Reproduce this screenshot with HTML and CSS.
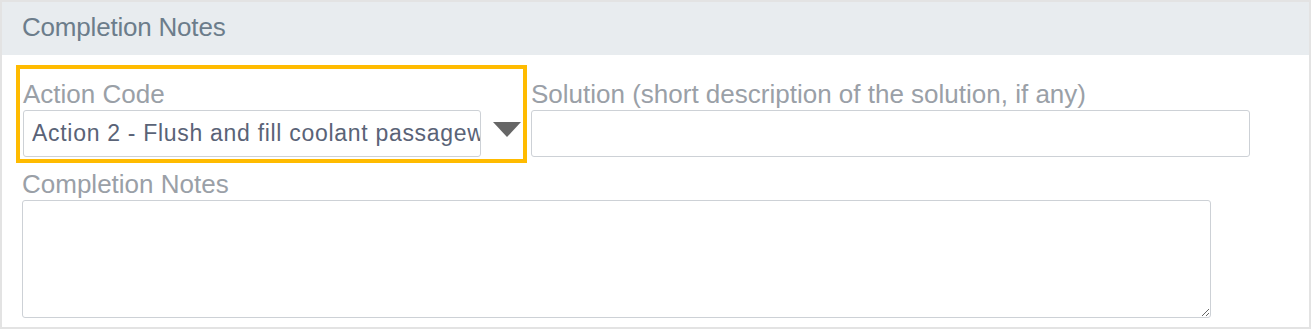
FILE: index.html
```html
<!DOCTYPE html>
<html lang="en">
<head>
    <meta charset="UTF-8">
    <link rel="stylesheet" href="styles.css">
    <title>Completion Notes</title>
</head>
<body>
    <div class="panel">
        <div class="panel-header">Completion Notes</div>
        <div class="panel-body">
            <div class="form-row">
                <!-- highlighted field -->
                <div class="field field-action">
                    <label class="field-label" for="actionCode">Action Code</label>
                    <div class="select-wrap">
                        <input class="field-input select-input" id="actionCode" type="text" value="Action 2 - Flush and fill coolant passageways" readonly>
                        <span class="select-arrow"></span>
                    </div>
                </div>
                <div class="field field-solution">
                    <label class="field-label" for="solution">Solution (short description of the solution, if any)</label>
                    <input class="field-input solution-input" id="solution" type="text">
                </div>
            </div>
            <div class="field field-notes">
                <label class="field-label" for="notes">Completion Notes</label>
                <textarea class="notes-input" id="notes"></textarea>
            </div>
        </div>
    </div>
</body>
</html>
```

FILE: styles.css
```css
body {
    margin: 0;
    padding: 0;
    font-family: "Liberation Sans", Arial, sans-serif;
    background-color: #fff;
}

.panel {
    width: 1311px;
    height: 329px;
    box-sizing: border-box;
    border: 2px solid #e3e3e3;
}

.panel-header {
    height: 53px;
    line-height: 50px;
    padding-left: 20px;
    background-color: #e8ecef;
    color: #6c7d8b;
    font-size: 26px;
    letter-spacing: -0.2px;
}

.panel-body {
    padding: 10px 0 0 14px;
}

.form-row {
    display: flex;
    align-items: flex-start;
}

.field {
    display: flex;
    flex-direction: column;
}

.field-label {
    font-size: 26px;
    line-height: 30px;
    color: #9aa0a7;
    white-space: nowrap;
}

.field-action {
    width: 511px;
    box-sizing: border-box;
    border: 4px solid #ffbb00;
    padding: 10px 0 2px 3px;
}

.select-wrap {
    display: flex;
    align-items: flex-start;
    margin-top: 1px;
}

.field-input {
    box-sizing: border-box;
    height: 47px;
    border: 1px solid #cdd1d6;
    border-radius: 3px;
    background: #fff;
    font-family: "Liberation Sans", Arial, sans-serif;
    outline: none;
}

.select-input {
    width: 458px;
    padding: 0 0 0 8px;
    font-size: 23px;
    letter-spacing: 0.7px;
    color: #5a6377;
}

.select-arrow {
    width: 0;
    height: 0;
    margin: 12px 0 0 12px;
    border-top: 15px solid #666;
    border-left: 14px solid transparent;
    border-right: 14px solid transparent;
}

.field-solution {
    margin-left: 4px;
    padding-top: 14px;
}

.solution-input {
    width: 719px;
    margin-top: 1px;
}

.field-notes {
    margin: 6px 0 0 6px;
}

.notes-input {
    box-sizing: border-box;
    width: 1189px;
    height: 118px;
    margin-top: 1px;
    border: 1px solid #cdd1d6;
    border-radius: 3px;
    outline: none;
}
```
